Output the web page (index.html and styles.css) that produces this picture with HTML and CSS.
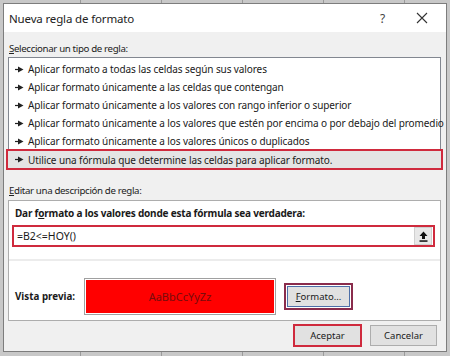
FILE: index.html
```html
<!DOCTYPE html>
<html lang="es">
<head>
    <meta charset="UTF-8">
    <meta name="viewport" content="width=device-width, initial-scale=1.0">
    <title>Nueva regla de formato</title>
    <link rel="stylesheet" href="styles.css">
</head>
<body>
    <div class="screen">
        <div class="dialog">
            <div class="titlebar">
                <span class="title">Nueva regla de formato</span>
                <span class="help">?</span>
                <span class="close">
                    <svg width="12" height="12" viewBox="0 0 12 12"><path d="M1 1L11 11M11 1L1 11" stroke="#333" stroke-width="1.1"/></svg>
                </span>
            </div>

            <div class="body">
                <div class="label"><u>S</u>eleccionar un tipo de regla:</div>
                <div class="rule-list">
                    <div class="rule"><svg class="arrow" width="9" height="7" viewBox="0 0 9 7"><path d="M0 3.5H4" stroke="#222" stroke-width="1.2"/><path d="M3 0.5L8.5 3.5L3 6.5Z" fill="#222"/></svg>Aplicar formato a todas las celdas según sus valores</div>
                    <div class="rule"><svg class="arrow" width="9" height="7" viewBox="0 0 9 7"><path d="M0 3.5H4" stroke="#222" stroke-width="1.2"/><path d="M3 0.5L8.5 3.5L3 6.5Z" fill="#222"/></svg>Aplicar formato únicamente a las celdas que contengan</div>
                    <div class="rule"><svg class="arrow" width="9" height="7" viewBox="0 0 9 7"><path d="M0 3.5H4" stroke="#222" stroke-width="1.2"/><path d="M3 0.5L8.5 3.5L3 6.5Z" fill="#222"/></svg>Aplicar formato únicamente a los valores con rango inferior o superior</div>
                    <div class="rule"><svg class="arrow" width="9" height="7" viewBox="0 0 9 7"><path d="M0 3.5H4" stroke="#222" stroke-width="1.2"/><path d="M3 0.5L8.5 3.5L3 6.5Z" fill="#222"/></svg>Aplicar formato únicamente a los valores que estén por encima o por debajo del promedio</div>
                    <div class="rule"><svg class="arrow" width="9" height="7" viewBox="0 0 9 7"><path d="M0 3.5H4" stroke="#222" stroke-width="1.2"/><path d="M3 0.5L8.5 3.5L3 6.5Z" fill="#222"/></svg>Aplicar formato únicamente a los valores únicos o duplicados</div>
                    <div class="rule selected"><svg class="arrow" width="9" height="7" viewBox="0 0 9 7"><path d="M0 3.5H4" stroke="#222" stroke-width="1.2"/><path d="M3 0.5L8.5 3.5L3 6.5Z" fill="#222"/></svg>Utilice una fórmula que determine las celdas para aplicar formato.</div>
                </div>

                <div class="label label-edit"><u>E</u>ditar una descripción de regla:</div>
                <div class="desc-panel">
                    <div class="desc-title">Dar f<u>o</u>rmato a los valores donde esta fórmula sea verdadera:</div>
                    <div class="formula-box">
                        <span class="formula">=B2&lt;=HOY()</span>
                        <span class="ref-btn">
                            <svg width="9" height="11" viewBox="0 0 9 11"><path d="M4.5 0.5L8.5 5H6V8H3V5H0.5Z" fill="#111"/><rect x="0.5" y="9.3" width="8" height="1.5" fill="#111"/></svg>
                        </span>
                    </div>
                    <div class="separator"></div>
                    <div class="preview-row">
                        <div class="preview-label">Vista previa:</div>
                        <div class="preview-box">AaBbCcYyZz</div>
                        <div class="format-wrap"><button class="btn format-btn"><u>F</u>ormato...</button></div>
                    </div>
                </div>

                <div class="buttons">
                    <button class="btn accept">Aceptar</button>
                    <button class="btn cancel">Cancelar</button>
                </div>
            </div>
        </div>
    </div>
</body>
</html>
```

FILE: styles.css
```css
html, body { margin: 0; padding: 0; }
body { font-family: "Noto Sans", "Open Sans", sans-serif; font-size: 10px; color: #1a1a1a; }

.screen {
    width: 450px; height: 356px; box-sizing: border-box;
    padding: 3px 3px 4px 3px;
    background: #c8c8c8;
    background-image: repeating-linear-gradient(90deg, transparent 0 80px, #9a9a9a 80px 81px);
}
.dialog {
    height: 100%; box-sizing: border-box;
    border: 1px solid #7d7d7d;
    background: #f0f0f0;
    display: flex; flex-direction: column;
}

.titlebar { height: 28px; background: #fff; display: flex; align-items: center; padding: 0 0 0 5px; }
.title { font-size: 11.5px; letter-spacing: -0.15px; flex: 1; color: #222; }
.help { font-size: 12px; color: #444; width: 36px; }
.close { width: 30px; display: flex; align-items: center; }

.body { flex: 1; padding: 0 5px 0 4px; display: flex; flex-direction: column; }
.label { font-size: 9.7px; letter-spacing: -0.35px; line-height: 16px; margin-top: 9px; padding-left: 1px; color: #222; }
.label-edit { margin-top: 14px; }

.rule-list { background: #fff; border: 1px solid #828790; padding-top: 2px; }
.rule { height: 18px; line-height: 18px; display: flex; align-items: center; white-space: nowrap; padding-left: 6px; letter-spacing: -0.1px; }
.arrow { margin-right: 4px; flex: none; }
.rule.selected {
    height: 17px; margin: -1px -3px -2px -3px; padding-left: 7px;
    border: 2px solid #cf2a3d; background: #e4e4e4;
}

.desc-panel { margin-top: 1px; background: #fff; border: 1px solid #adadad; padding-bottom: 5px; }
.desc-title { font-weight: bold; letter-spacing: -0.2px; line-height: 16px; margin-top: 4px; padding-left: 6px; }
.formula-box {
    margin: 4px 5px 0 3px; height: 22px; box-sizing: border-box;
    border: 2px solid #cf2a3d; display: flex; align-items: center; padding: 0 1px 0 3px;
    font-size: 10.5px;
}
.formula { flex: 1; }
.ref-btn {
    width: 16px; height: 16px; background: #e8e8e8; border: 1px solid #d0d0d0;
    display: flex; align-items: center; justify-content: center;
}
.separator { margin-top: 12px; height: 2px; background: #ececec; }

.preview-row { display: flex; align-items: center; margin-top: 17px; }
.preview-label { width: 68px; padding-left: 6px; font-weight: bold; font-size: 9.8px; flex: none; box-sizing: content-box; }
.preview-box {
    width: 192px; height: 37px; box-sizing: border-box; flex: none; margin-left: 1px;
    border: 1px solid #a0a0a0; box-shadow: inset 0 0 0 1px #fff;
    background: #ff0000; color: #780c0c; font-size: 11px;
    display: flex; align-items: center; justify-content: center;
}
.format-wrap { margin-left: 8px; border: 2px solid #8a2c4c; padding: 1px; }

.btn {
    font-family: inherit; font-size: 9.5px; color: #1a1a1a;
    background: #e1e1e1; border: 1px solid #adadad; padding: 0; margin: 0;
}
.format-btn { width: 63px; height: 21px; border-color: #4d6fa8; }

.buttons { display: flex; justify-content: flex-end; gap: 8px; margin-top: 3px; padding-right: 4px; }
.accept { width: 69px; height: 23px; border: 2px solid #cf2a3d; }
.cancel { width: 67px; height: 21px; margin-top: 1px; }
```
